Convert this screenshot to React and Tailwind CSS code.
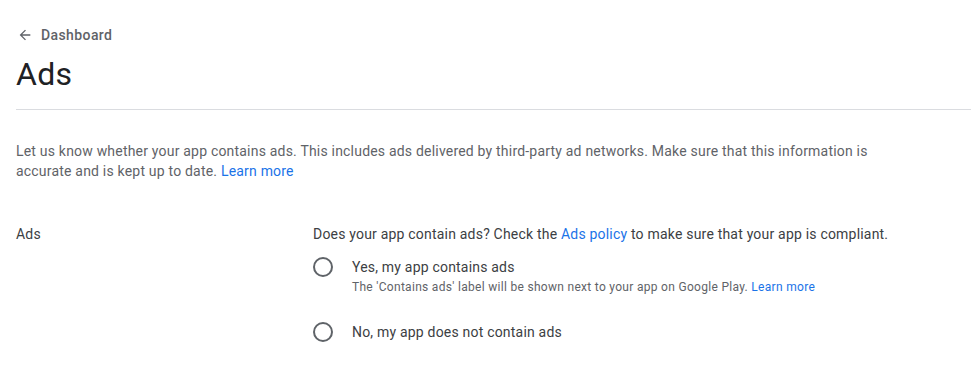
import React from 'react';

function Radio({ label, hint }) {
    return (
        <div className="flex items-start">
            <div className="w-[40px] h-[40px] -ml-[10px] -mt-[10px] flex items-center justify-center shrink-0">
                <div className="w-[20px] h-[20px] rounded-full border-2 border-[#5f6368]"></div>
            </div>
            <div className="ml-[9px]">
                <div className="text-[14px] leading-[20px] tracking-[0.2px] text-[#3c4043]">{label}</div>
                {hint && (
                    <div className="text-[12px] leading-[16px] tracking-[0.3px] text-[#5f6368] mt-[2px]">
                        {hint} <a className="text-[#1a73e8]">Learn more</a>
                    </div>
                )}
            </div>
        </div>
    );
}

export default function App() {
    return (
        <div className="bg-white min-h-screen pl-[16px] font-['Roboto',sans-serif]">
            <div className="pt-[25px] flex items-center h-[20px] box-content text-[14px] text-[#5f6368]">
                <svg width="16" height="16" viewBox="0 0 24 24" className="ml-[1px]" fill="#5f6368">
                    <path d="M20 11H7.83l5.59-5.59L12 4l-8 8 8 8 1.41-1.41L7.83 13H20v-2z" />
                </svg>
                <span className="ml-[8px] font-medium tracking-[0.4px]">Dashboard</span>
            </div>
            <h1 className="mt-[9px] text-[32px] leading-[40px] tracking-[0.3px] text-[#202124] font-normal">Ads</h1>
            <div className="mt-[15px] border-t border-[#dadce0]"></div>

            <p className="mt-[31px] max-w-[880px] text-[14px] leading-[20px] tracking-[0.2px] text-[#5f6368]">
                Let us know whether your app contains ads. This includes ads delivered by third-party ad networks. Make sure that this information is accurate and is kept up to date. <a className="text-[#1a73e8]">Learn more</a>
            </p>

            <div className="mt-[43px] flex">
                <div className="w-[297px] shrink-0 text-[14px] leading-[20px] tracking-[0.2px] text-[#3c4043]">Ads</div>
                <div>
                    <div className="text-[14px] leading-[20px] tracking-[0.2px] text-[#3c4043]">
                        Does your app contain ads? Check the <a className="text-[#1a73e8]">Ads policy</a> to make sure that your app is compliant.
                    </div>
                    <div className="mt-[13px] flex flex-col gap-[27px]">
                        <Radio label="Yes, my app contains ads" hint="The 'Contains ads' label will be shown next to your app on Google Play." />
                        <Radio label="No, my app does not contain ads" />
                    </div>
                </div>
            </div>
        </div>
    );
}
